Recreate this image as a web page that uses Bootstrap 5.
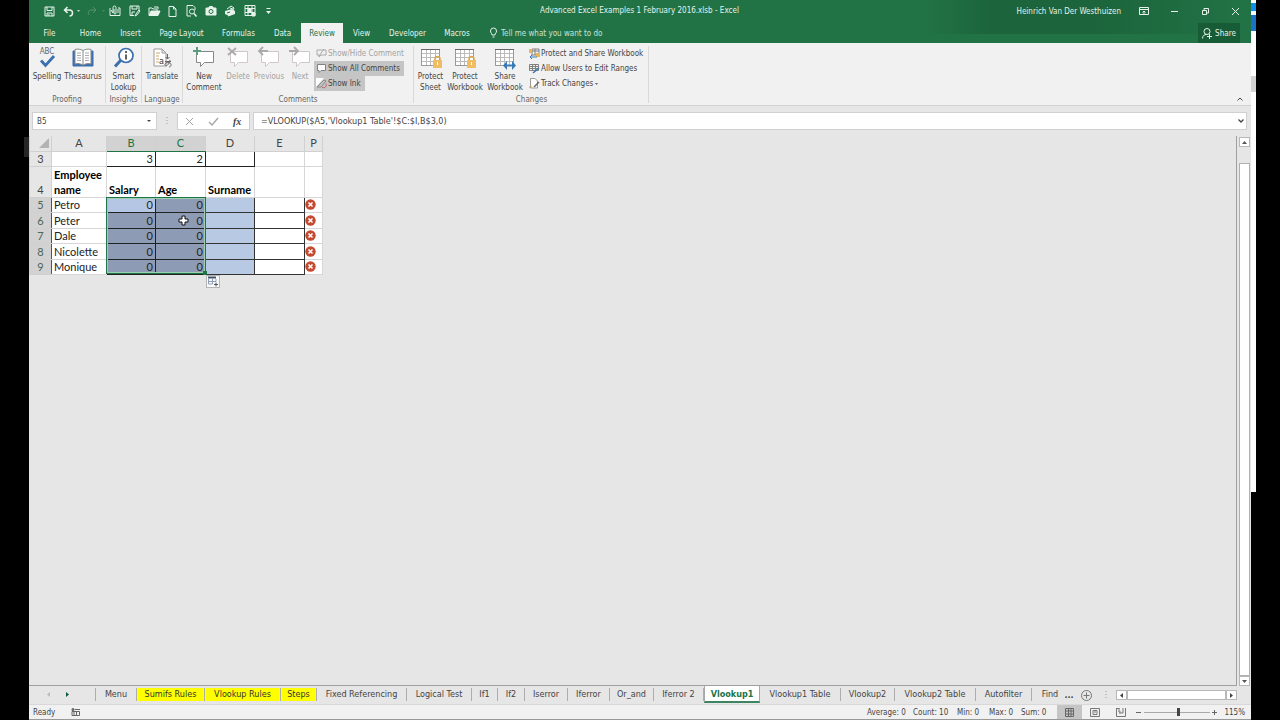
<!DOCTYPE html>
<html lang="en">
<head>
<meta charset="utf-8">
<meta name="viewport" content="width=device-width, initial-scale=1">
<title>Advanced Excel Examples 1 February 2016.xlsb - Excel</title>
<link href="https://cdn.jsdelivr.net/npm/bootstrap@5.3.0/dist/css/bootstrap.min.css" rel="stylesheet">
<style>
:root{--green:#217346;--ink:#444}
body{background:#000;font:8px/11px "DejaVu Sans Condensed","DejaVu Sans","Open Sans",sans-serif;color:var(--ink);padding-left:29px;padding-right:24px}
button,input{font:inherit;color:inherit}
button{background:none;border:0;padding:0;white-space:nowrap}
a{color:inherit;text-decoration:none;white-space:nowrap}
svg{display:block;fill:none;stroke:currentColor;flex:none;overflow:visible}
.app{background:#e6e6e6;min-width:0}
.behind{width:5px;height:492px;background:linear-gradient(#fff 3px,#0f8fe8 3px 11px,#fff 11px 15px,#1a73c8 15px 31px,#fff 31px 76px,#d2d2d2 76px 92px,#fff 92px)}
.left-mark{left:24px;top:137px;width:5px;height:20px;background:#262626}
/* title bar and ribbon tabs */
.top{background:linear-gradient(90deg,transparent 73%,#1c643b 79%,#1c643b 86%,#1f6c41 94%,#217346) 0 0/100% 34px no-repeat,var(--green);color:#e6f2ea}
.titlebar{height:23px;padding-bottom:1px}
.qat{display:grid;grid-template-columns:20px 18px 3px 22px 2px 21px 19px 19px 19px 19px 19px 20px 19px 19px;padding-left:10px}
.qat button,.center{display:flex;align-items:center;justify-content:center}
.doc-title{left:0;right:0;top:5px;text-align:center;padding-right:1px}
.who{margin-right:7px}
.wins{display:grid;grid-template-columns:31px 31px 30px 31px}
.tabs{height:20px;display:grid;grid-template-columns:41px 41px 39px 63px 51px 37px 42px 37px 55px 44px 18px auto 1fr auto}
.tabs>.on{background:#f1f1f1;color:var(--green)}
.tell{border:0;background:none;width:130px;padding:0;margin-left:4px;outline:0}
.tell::placeholder{color:#cde0d4;opacity:1}
.share{background:#185c37;width:42px;margin-right:11px;gap:3px}
/* ribbon */
.ribbon{background:#f1f1f1;height:63px;padding-top:3px;border-bottom:1px solid #d2d2d2}
.group{border-right:1px solid #d9d9d9;height:57px}
.group>p{margin:0;text-align:center;color:#666;line-height:11px}
.cmds{display:grid;height:48px}
.g1{width:77px}.g1 .cmds{grid-template-columns:36px 36px}
.g2{width:36px}.g3{width:41px}
.g4{width:231px}.g4 .cmds{grid-template-columns:42px 26px 36px 26px 1fr}
.g5{width:235px;padding-left:1px}.g5 .cmds{grid-template-columns:31px 38px 42px 1fr}
.big{display:flex;flex-direction:column;align-items:center;text-align:center}
.big svg{width:22px;height:22px;margin:1px 0 2px}
.dim{color:#a3a3a3}
.small-cmds button{display:flex;align-items:center;height:15px;gap:1px;padding:0 4px 0 2px}
.small-cmds svg{width:11px;height:11px;color:#808080}
.small-cmds .down{width:5px;height:4px;color:#444}
.pressed{background:#c5c5c5}
.stack{display:flex;flex-direction:column;align-items:flex-start;padding-left:1px}
/* formula bar */
.fbar{padding:6px 4px 6px 3px}
.box{height:18px;background:#fff;border:1px solid #d0d0d0}
.namebox{width:125px}
.grip{width:20px}
.box input{border:0;background:none;outline:0;padding:0 4px;min-width:0;flex:1}
.formula{font-size:9px;margin-left:3px}
.formula input{padding-left:7px}
.fx{width:73px;display:grid;grid-template-columns:1fr 1fr 1fr}
.fx i{font:italic bold 10px/11px "Liberation Serif",serif}
/* grid */
.grid{table-layout:fixed;width:293px;border-collapse:collapse;font:11px/15px Lato,sans-serif;color:#222}
.grid th,.grid td{padding:0 2px;border:1px solid #d6d6d6;height:15px;line-height:13px;overflow:hidden;white-space:nowrap}
.grid td{background:#fff}
.grid .tall td,.grid .tall th{height:31px;vertical-align:bottom;font-weight:bold;color:#000;line-height:15px;white-space:normal}
.grid thead th,.grid tbody th,.grid .tall th{font-weight:400;text-align:center;background:#e6e6e6;color:#444;border-color:#d0d0d0}
.grid thead th{height:15px;line-height:14px;border-top:0}
.grid thead .sel{background:#d2d2d2;color:var(--green);border-bottom:1px solid var(--green)}
.grid tbody .sel{background:#d2d2d2;color:#4a6656;border-right:1px solid var(--green)}
.grid .odd td{height:16px}
.grid td.n{text-align:right;border-color:#222}
.grid td.k{background:#8e9bb5;text-align:right;border-color:#222}
.grid td.act{background:#b4c6e4}
.grid td.blue{background:#b8c9e3;border-color:#333}
.grid td.ln{border-color:#333}
.grid td.bad{padding:0}
.grid td.bad svg{width:11px;height:11px}
.range{left:77px;top:61px;width:100px;height:77px;border:1px solid #1e7548;outline:1px solid #9bcfb0;outline-offset:-2px;pointer-events:none}
.range:after{content:"";position:absolute;right:-2px;bottom:-2px;width:4px;height:4px;background:#1e7548}
.fill-opt{left:177px;top:139px;width:14px;height:13px;background:#fafafa;border:1px solid #b5b5b5}
.cursor{left:149px;top:79px}
.canvas{border-right:1px solid #a0a0a0;border-bottom:1px solid #a0a0a0;min-width:0}
.vs{width:14px;padding:1px 1px 0 2px}
.sbtn{width:11px;height:10px;background:#fff;border:1px solid #b8b8b8;display:flex;align-items:center;justify-content:center}
.thumb{background:#fff;border:1px solid #b0b0b0;width:11px}
/* sheet tabs */
.sheets{height:18px;font-size:9px;display:grid;grid-template-columns:67px 41px 68px 76px 36px 90px 65px 26px 27px 43px 42px 44px 50px 56px 81px 54px 81px 56px 28px 18px 17px 21px 1fr;padding-right:14px}
.sheets>a,.arrows{display:flex;align-items:center;justify-content:center;border-right:1px solid #adadad;margin:2px 0 3px}
.sheets>a.yel{background:#ff0 content-box;color:#333;padding:0 1px}
.sheets>a.cur{background:#fff;color:var(--green);font-weight:bold;margin:-1px 0 1px;padding-top:2px;border:1px solid #a8a8a8;border-top:0;border-bottom:2px solid #3d8560}
.sheets>a.last{border:0}
.arrows{gap:16px;padding-left:0;padding-right:8px}
.status{height:16px;background:#f1f1f1;border-top:1px solid #d8d8d8;border-bottom:1px solid #999}
.status svg{color:#666}
.stats{display:grid;grid-template-columns:46px 44px 32px 32px 36px 25px 26px 25px;align-items:center;margin-right:3px}
.zoomer{width:66px;height:10px;appearance:none;background:linear-gradient(#aaa,#aaa) 0 5px/100% 1px no-repeat;margin:0 2px 0 3px}
.zoomer::-webkit-slider-thumb{appearance:none;width:3px;height:8px;background:#444}
.pct{width:34px;text-align:right;padding-right:6px}
</style>
</head>
<body class="d-flex vh-100 overflow-hidden">
<svg width="0" height="0" class="position-absolute" aria-hidden="true">
<symbol id="car" viewBox="0 0 6 4"><path d="M1 1h4L3 3z" fill="currentColor" stroke="none"/></symbol>
<symbol id="bub" viewBox="0 0 22 22"><path d="M3.500 4.500h17v11h-9l-4 4v-4h-4z" fill="#fff"/></symbol>
<symbol id="sheet" viewBox="0 0 22 22"><rect x="1.500" y="2.500" width="18" height="16" fill="#fff" stroke="#999"/><path d="M2 6.500h17M2 10.500h17M2 14.500h17M6.500 3v15M10.500 3v15M15.500 3v15" stroke="#bbb"/><path d="M1 2.500h19" stroke="#666"/></symbol>
<symbol id="lock" viewBox="0 0 22 22"><path d="M15 14v-2a2.500 2.500 0 0 1 5 0v2" stroke="#dba94b" stroke-width="1.500"/><rect x="13" y="13" width="9" height="8" fill="#f0bd62" stroke="none"/><path d="M17.500 15v3" stroke="#fff"/></symbol>
<symbol id="err" viewBox="0 0 11 11"><circle cx="5.500" cy="5.500" r="5.200" fill="#c44a2f" stroke="none"/><path d="M3.500 3.500l4 4m0-4l-4 4" stroke="#fff" stroke-width="1.600"/></symbol>
</svg>
<div class="left-mark position-absolute"></div>
<main class="app flex-grow-1 d-flex flex-column">
<header class="top">
 <div class="titlebar d-flex position-relative">
  <div class="doc-title position-absolute">Advanced Excel Examples 1 February 2016.xlsb - Excel</div>
  <div class="qat position-relative">
   <button aria-label="Save"><svg width="11" height="11"><path d="M1 1h9v9H1zM3 1v3.500h5V1M3 10V7h5v3M5 8v2"/></svg></button>
   <button aria-label="Undo"><svg width="11" height="11"><path d="M4.500 1L1.500 4l3 3M2 4h4.500a3 3 0 0 1 0 6" stroke-width="1.500"/></svg></button>
   <button aria-label="Undo list"><svg width="5" height="4"><use href="#car"/></svg></button>
   <button aria-label="Redo" class="opacity-25"><svg width="11" height="11"><path d="M7 1l3 3-3 3M9 4H5a3 3 0 0 0-2 5"/></svg></button>
   <button aria-label="Redo list" class="opacity-25"><svg width="5" height="4"><use href="#car"/></svg></button>
   <button aria-label="Attach"><svg width="12" height="12"><path d="M1 3v7.500h10V3H9M4 8V2.500a1.500 1.500 0 0 1 3 0V8a1 1 0 0 1-2 0V4M2 5l2 3M8 5h2M8 7h2"/></svg></button>
   <button aria-label="Save as"><svg width="11" height="12"><path d="M5 10.500H1V1h9v4M3 1v3h5V1M3 10V7h3M6 11l1-2 3-4 1 1-3 4z"/></svg></button>
   <button aria-label="Open"><svg width="12" height="11"><path d="M1 9V2h3l1 1h4v2M6 1h4v2"/><path d="M1 9.500L3 5h9l-2 4.500z" fill="currentColor"/></svg></button>
   <button aria-label="New"><svg width="9" height="11"><path d="M1 .5h4.500L8 3v7.500H1zM5.500.5V3H8"/></svg></button>
   <button aria-label="Print preview"><svg width="11" height="12"><path d="M5 11H1V.5h6L9 2.500V5"/><circle cx="6" cy="6.500" r="2.500"/><path d="M8 8.500l2.500 3" stroke-width="1.500"/></svg></button>
   <button aria-label="Camera"><svg width="12" height="10"><path d="M1 2h2.500l1-1.500h3L8.500 2H11v7H1z" fill="currentColor"/><circle cx="6" cy="5.500" r="2" stroke="#217346"/></svg></button>
   <button aria-label="Quick print"><svg width="12" height="12"><path d="M1 6l7-2 3 2v3l-6 2-4-2z" fill="currentColor" stroke="none"/><path d="M3 4l4-3 3 2-1 2M4 11l5-2M6 3l3 1"/><path d="M3 8l3-1" stroke="#217346"/></svg></button>
   <button aria-label="Calculate"><svg width="12" height="12"><path d="M1 .5h10v10H1zM1 3.500h10M1 7.500h10M4 1v10M8 1v10"/><path d="M4 4h3v3H4zM8 8h3v3H8z" fill="currentColor"/></svg></button>
   <button aria-label="Customize"><svg width="7" height="8"><path d="M1.500 1.500h4"/><path d="M1 4h5L3.500 7z" fill="currentColor" stroke="none"/></svg></button>
  </div>
  <div class="ms-auto d-flex align-items-center position-relative"><span class="who">Heinrich Van Der Westhuizen</span>
   <div class="wins">
    <button class="center" aria-label="Ribbon options"><svg width="10" height="8"><path d="M.5.500h9v7h-9zM.5 2.500h9M5 7V4M3.500 5.500L5 4l1.500 1.500"/></svg></button>
    <button class="center" aria-label="Minimize"><svg width="7" height="7"><path d="M0 3.500h7"/></svg></button>
    <button class="center" aria-label="Restore"><svg width="7" height="7"><path d="M.5 2.500h4v4h-4zM2 2V.5h4.500V5H5"/></svg></button>
    <button class="center" aria-label="Close"><svg width="7" height="7"><path d="M0 0l7 7M7 0L0 7"/></svg></button>
   </div>
  </div>
 </div>
 <nav class="tabs">
  <a href="#" class="center">File</a><a href="#" class="center">Home</a><a href="#" class="center">Insert</a><a href="#" class="center">Page Layout</a><a href="#" class="center">Formulas</a><a href="#" class="center">Data</a><a href="#" class="center on">Review</a><a href="#" class="center">View</a><a href="#" class="center">Developer</a><a href="#" class="center">Macros</a>
  <span class="d-flex align-items-center justify-content-end"><svg width="7" height="10"><path d="M2 7C2 5.500.5 5 .5 3a2.500 2.500 0 0 1 6 0C6.500 5 5 5.500 5 7zM2.500 9h2"/></svg></span>
  <input class="tell" aria-label="Tell me" placeholder="Tell me what you want to do"><span></span>
  <button class="share center"><svg width="10" height="11"><circle cx="5" cy="3.500" r="3"/><path d="M.5 10.500c0-3 2-4 4-4M5 8.500h5M7.500 6v5"/></svg>Share</button>
 </nav>
</header>
<section class="ribbon d-flex position-relative">
 <div class="group g1"><div class="cmds">
  <button class="big"><svg viewBox="0 0 22 22"><text x="11" y="7" text-anchor="middle" font-size="8" fill="#666" stroke="none">ABC</text><path d="M5 13.500l4.500 5L18 9" stroke="#3b6fae" stroke-width="2.800"/></svg>Spelling</button>
  <button class="big"><svg viewBox="0 0 22 22"><path d="M1 4h9l1 1 1-1h9v15H1z" fill="#3b6fae" stroke="#3b6fae"/><path d="M3 2.500c3-1 6 0 8 1 2-1 5-2 8-1V17c-3-1-6 0-8 1-2-1-5-2-8-1z" fill="#fff" stroke="#888"/><path d="M11 4v14" stroke="#888"/><path d="M5 6h4M5 8.500h4M5 11h4M5 13.500h4M13 6h4M13 8.500h4M13 11h4M13 13.500h4" stroke="#aaa"/></svg>Thesaurus</button></div><p>Proofing</p></div>
 <div class="group g2"><div class="cmds"><button class="big"><svg viewBox="0 0 22 22"><path d="M8 13l-6 6.500" stroke="#3b6fae" stroke-width="3"/><circle cx="13" cy="8.500" r="7" fill="#fff" stroke="#3b6fae" stroke-width="1.700"/><path d="M13 7.500v5M13 4v2" stroke="#444" stroke-width="1.700"/></svg>Smart<br>Lookup</button></div><p>Insights</p></div>
 <div class="group g3"><div class="cmds"><button class="big"><svg viewBox="0 0 22 22"><path d="M3 2h8l4 4v13H3zM11 2v4h4" fill="#fff" stroke="#999"/><path d="M5 6h4M5 9h3M5 12h3M5 15h3" stroke="#d0a764"/><text x="8" y="17" font-size="9" fill="#333" stroke="none">a</text><path d="M16.500 7v5M14.500 10l2 2 2-2M14 14.500h6M19 13c-1 5-4 7-5 5s3-3 5-2 1 4-1 4" stroke="#666"/></svg>Translate</button></div><p>Language</p></div>
 <div class="group g4"><div class="cmds">
  <button class="big"><svg viewBox="0 0 22 22"><use href="#bub" stroke="#888"/><path d="M4 0v8M0 4h8" stroke="#5e9b7c" stroke-width="2"/></svg>New<br>Comment</button>
  <button class="big dim"><svg viewBox="0 0 22 22"><use href="#bub" stroke="#d3c6c8"/><path d="M1 1l8 7M9 1L1 8" stroke="#aaa" stroke-width="1.800"/></svg>Delete</button>
  <button class="big dim"><svg viewBox="0 0 22 22"><use href="#bub" stroke="#d3c6c8"/><path d="M10 4H2M5 0L1 4l4 4" stroke="#aaa" stroke-width="1.800"/></svg>Previous</button>
  <button class="big dim"><svg viewBox="0 0 22 22"><use href="#bub" stroke="#d3c6c8"/><path d="M0 4h8M5 0l4 4-4 4" stroke="#aaa" stroke-width="1.800"/></svg>Next</button>
  <div class="small-cmds stack">
   <button class="dim"><svg viewBox="0 0 11 11"><path d="M1 2h9v5H5L3 9V7H1zM8 1L3 8" stroke="#aaa"/></svg>Show/Hide Comment</button>
   <button class="pressed"><svg viewBox="0 0 11 11"><path d="M1.500 1.500h8v6H5L3 9.500v-2H1.500z" fill="#fff"/></svg>Show All Comments</button>
   <button class="pressed"><svg viewBox="0 0 11 11"><path d="M0 0h8L0 9z" fill="#fff" stroke="none"/><path d="M1 9l7-7 2 1-5 6z" stroke="#888"/><path d="M6 9.500c3 1 5-1 4-4" stroke="#c0605d"/></svg>Show Ink</button></div></div><p>Comments</p></div>
 <div class="group g5"><div class="cmds">
  <button class="big"><svg viewBox="0 0 22 22"><use href="#sheet"/><use href="#lock"/></svg>Protect<br>Sheet</button>
  <button class="big"><svg viewBox="0 0 22 22"><use href="#sheet"/><use href="#lock"/></svg>Protect<br>Workbook</button>
  <button class="big"><svg viewBox="0 0 22 22"><use href="#sheet"/><path d="M11 18.500h9" stroke="#3b7ab8" stroke-width="2"/><path d="M13 14l-4 4.500 4 4.500zM18 14l4 4.500-4 4.500z" fill="#3b7ab8" stroke="none"/></svg>Share<br>Workbook</button>
  <div class="small-cmds stack">
   <button><svg viewBox="0 0 11 11"><path d="M3 1h7v6H3zM3 3h7M6 1v6"/><path d="M0 1h3v4H0zM7 5h4v4H7z" fill="#e9b75a" stroke="none"/><path d="M2 9h6M3 7L1 9l2 2" stroke="#3b7ab8"/></svg>Protect and Share Workbook</button>
   <button><svg viewBox="0 0 11 11"><path d="M.5 1.500h9v6h-9zM1 3.500h9M1 5.500h9M3.500 1v6M6.500 1v6"/><path d="M4 10l6-5" stroke="#3b7ab8" stroke-width="1.500"/></svg>Allow Users to Edit Ranges</button>
   <button><svg viewBox="0 0 11 11"><path d="M1.500.5H6L8.500 3v7h-7z" fill="#fff" stroke="#999"/><path d="M5 9l5-5" stroke="#666" stroke-width="1.500"/><path d="M0 9h3" stroke="#e9a040"/></svg>Track Changes<svg class="down"><use href="#car"/></svg></button></div></div><p>Changes</p></div>
 <button class="ms-auto align-self-end me-1 pb-1 pe-1" aria-label="Collapse ribbon"><svg width="6" height="4"><path d="M.5 3.500L3 1l2.500 2.500"/></svg></button>
</section>
<section class="fbar d-flex">
 <div class="box namebox d-flex align-items-center"><input aria-label="Name box" value="B5"><button class="pe-1" aria-label="Names"><svg width="6" height="4"><use href="#car"/></svg></button></div>
 <div class="center grip"><svg width="4" height="10"><path d="M2 1v8" stroke="#999" stroke-dasharray="1 2"/></svg></div>
 <div class="box fx"><button class="center dim" aria-label="Cancel"><svg width="7" height="7"><path d="M0 0l7 7M7 0L0 7"/></svg></button><button class="center dim" aria-label="Enter"><svg width="9" height="7"><path d="M0 4l3 3 6-7" stroke-width="1.300"/></svg></button><button class="center" aria-label="Insert function"><i>fx</i></button></div>
 <div class="box formula d-flex align-items-center flex-grow-1"><input aria-label="Formula" value="=VLOOKUP($A5,'Vlookup1 Table'!$C:$I,B$3,0)"><button aria-label="Expand"><svg width="8" height="4"><path d="M.5.500L3 3 5.500.5" stroke-width="1.300"/></svg></button></div>
</section>
<section class="d-flex flex-grow-1">
 <div class="canvas flex-grow-1 position-relative">
  <table class="grid">
   <colgroup><col style="width:22px"><col style="width:55px"><col style="width:49px"><col style="width:50px"><col style="width:49px"><col style="width:50px"><col style="width:18px"></colgroup>
   <thead><tr><th><svg width="10" height="10" class="ms-auto"><path d="M10 0v10H0z" fill="#b3b3b3" stroke="none"/></svg></th><th>A</th><th class="sel">B</th><th class="sel">C</th><th>D</th><th>E</th><th>P</th></tr></thead>
   <tbody>
   <tr><th>3</th><td></td><td class="n">3</td><td class="n">2</td><td class="n"></td><td></td><td></td></tr>
   <tr class="tall"><th>4</th><td>Employee name</td><td>Salary</td><td>Age</td><td>Surname</td><td></td><td></td></tr>
   <tr><th class="sel">5</th><td>Petro</td><td class="k act">0</td><td class="k">0</td><td class="blue"></td><td class="ln"></td><td class="bad"><svg><use href="#err"/></svg></td></tr>
   <tr class="odd"><th class="sel">6</th><td>Peter</td><td class="k">0</td><td class="k">0</td><td class="blue"></td><td class="ln"></td><td class="bad"><svg><use href="#err"/></svg></td></tr>
   <tr><th class="sel">7</th><td>Dale</td><td class="k">0</td><td class="k">0</td><td class="blue"></td><td class="ln"></td><td class="bad"><svg><use href="#err"/></svg></td></tr>
   <tr class="odd"><th class="sel">8</th><td>Nicolette</td><td class="k">0</td><td class="k">0</td><td class="blue"></td><td class="ln"></td><td class="bad"><svg><use href="#err"/></svg></td></tr>
   <tr><th class="sel">9</th><td>Monique</td><td class="k">0</td><td class="k">0</td><td class="blue"></td><td class="ln"></td><td class="bad"><svg><use href="#err"/></svg></td></tr>
   </tbody>
  </table>
  <div class="range position-absolute"></div>
  <button class="fill-opt position-absolute" aria-label="Auto fill options"><svg width="12" height="11"><path d="M1 1.500h8" stroke="#44546a" stroke-width="2"/><path d="M1.500 3v5h4V3M1.500 5.500H9V3" stroke="#8f9fb9"/><path d="M7 8.500h4M9 6.500v4" stroke="#555"/></svg></button>
  <svg class="cursor position-absolute" width="11" height="11"><path d="M4 1h3v3h3v3H7v3H4V7H1V4h3z" fill="#fff" stroke="#111"/></svg>
 </div>
 <div class="vs d-flex flex-column">
  <button class="sbtn" aria-label="Scroll up"><svg width="5" height="3"><path d="M0 3h5L2.500 0z" fill="#555" stroke="none"/></svg></button>
  <div class="pt-3"></div><div class="thumb flex-grow-1"></div>
  <button class="sbtn" aria-label="Scroll down"><svg width="5" height="3"><path d="M0 0h5L2.500 3z" fill="#555" stroke="none"/></svg></button>
 </div>
</section>
<nav class="sheets">
 <div class="arrows"><svg width="3" height="5"><path d="M3 0v5L0 2.500z" fill="#bbb" stroke="none"/></svg><svg width="3" height="5"><path d="M0 0v5l3-2.500z" fill="#0e5c39" stroke="none"/></svg></div>
 <a href="#">Menu</a><a href="#" class="yel">Sumifs Rules</a><a href="#" class="yel">Vlookup Rules</a><a href="#" class="yel">Steps</a><a href="#">Fixed Referencing</a><a href="#">Logical Test</a><a href="#">If1</a><a href="#">If2</a><a href="#">Iserror</a><a href="#">Iferror</a><a href="#">Or_and</a><a href="#">Iferror 2</a><a href="#" class="cur">Vlookup1</a><a href="#">Vlookup1 Table</a><a href="#">Vlookup2</a><a href="#">Vlookup2 Table</a><a href="#">Autofilter</a><a href="#" class="last ps-2">Find</a>
 <button class="center fw-bold">...</button>
 <button class="center" aria-label="New sheet"><svg width="11" height="11"><circle cx="5.500" cy="5.500" r="5" stroke="#777"/><path d="M5.500 2.500v6M2.500 5.500h6" stroke="#777"/></svg></button>
 <span class="center"><svg width="4" height="8"><path d="M2 0v8" stroke="#999" stroke-dasharray="1 2"/></svg></span>
 <div class="d-flex align-items-center"><button class="sbtn" aria-label="Scroll left"><svg width="3" height="5"><path d="M3 0v5L0 2.500z" fill="#444" stroke="none"/></svg></button><div class="sbtn flex-grow-1"></div><button class="sbtn" aria-label="Scroll right"><svg width="3" height="5"><path d="M0 0v5l3-2.500z" fill="#444" stroke="none"/></svg></button></div>
</nav>
<footer class="status d-flex align-items-center">
 <span class="ps-1">Ready</span><svg class="ms-3" width="9" height="8"><path d="M1 3.500h7.500v4H1zM3 3v4M5.500 3v4M4 1.500h5"/><circle cx="2" cy="1.500" r="1.500" fill="#666" stroke="none"/></svg>
 <div class="stats ms-auto text-nowrap h-100"><span>Average: 0</span><span>Count: 10</span><span>Min: 0</span><span>Max: 0</span><span>Sum: 0</span>
 <button class="center h-100 pressed" aria-label="Normal view"><svg width="9" height="9"><path d="M.5.500h8v8h-8zM3.500 0v8M6 0v8M0 3h9M0 6h9" stroke="#666"/></svg></button>
 <button class="center" aria-label="Page layout view"><svg width="10" height="9"><path d="M.5.500h9v8h-9zM3 2.500h4v4H3zM4 4h2" stroke="#777"/></svg></button>
 <button class="center" aria-label="Page break view"><svg width="10" height="9"><path d="M.5 0v8.500h9V0M3 0v4h2M7 0v5H3M.5.500h3" stroke="#777"/></svg></button></div>
 <button aria-label="Zoom out"><svg width="5" height="5"><path d="M0 2.500h5"/></svg></button><input class="zoomer" type="range" aria-label="Zoom" min="10" max="400" value="212"><button aria-label="Zoom in"><svg width="5" height="5"><path d="M0 2.500h5M2.500 0v5"/></svg></button><span class="pct">115%</span>
</footer>
</main>
<div class="behind flex-shrink-0"></div>
<script src="https://cdn.jsdelivr.net/npm/bootstrap@5.3.0/dist/js/bootstrap.bundle.min.js"></script>
</body>
</html>
